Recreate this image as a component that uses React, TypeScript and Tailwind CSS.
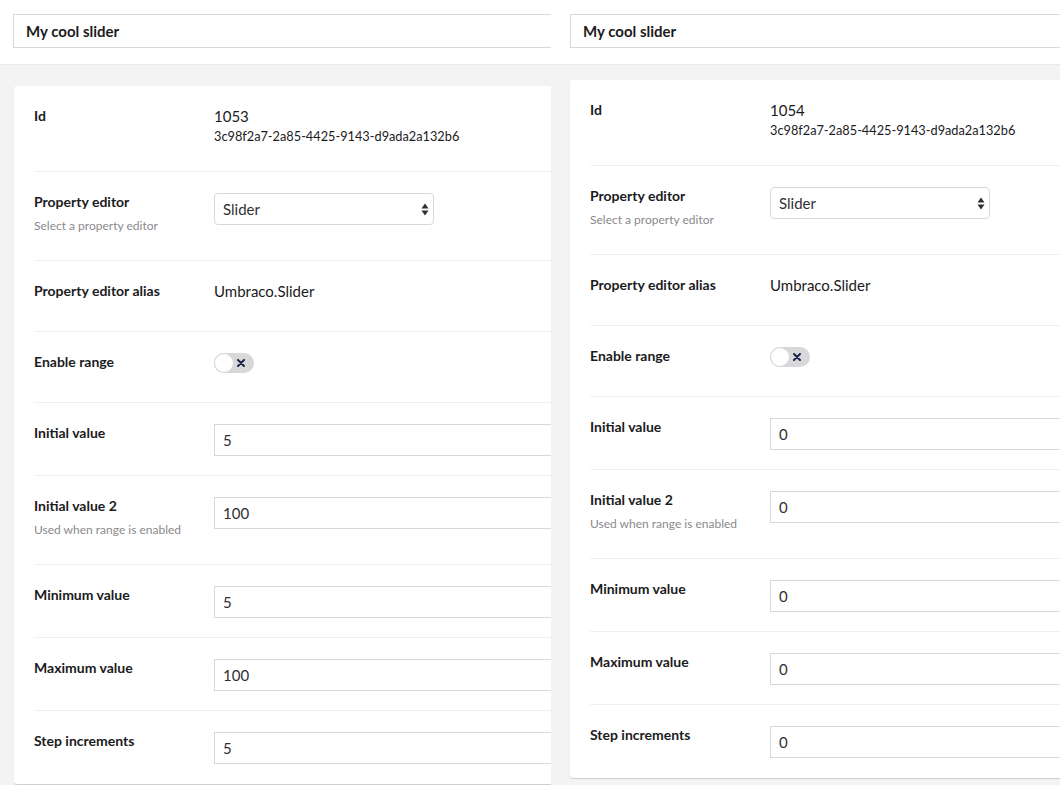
import React from "react";

type Row = {
  label: string;
  desc?: string;
  kind: "id" | "select" | "text" | "toggle" | "input";
  value?: string;
  guid?: string;
};

const makeRows = (id: string, v: string[]): Row[] => [
  { label: "Id", kind: "id", value: id, guid: "3c98f2a7-2a85-4425-9143-d9ada2a132b6" },
  { label: "Property editor", desc: "Select a property editor", kind: "select", value: "Slider" },
  { label: "Property editor alias", kind: "text", value: "Umbraco.Slider" },
  { label: "Enable range", kind: "toggle" },
  { label: "Initial value", kind: "input", value: v[0] },
  { label: "Initial value 2", desc: "Used when range is enabled", kind: "input", value: v[1] },
  { label: "Minimum value", kind: "input", value: v[2] },
  { label: "Maximum value", kind: "input", value: v[3] },
  { label: "Step increments", kind: "input", value: v[4] },
];

function Toggle() {
  return (
    <div className="relative h-5 w-10 rounded-full bg-[#d8d7d9]">
      <div className="absolute left-[1px] top-[1px] h-[18px] w-[18px] rounded-full bg-white shadow-[0_0_0_1px_#d8d7d9]" />
      <svg className="absolute right-[9px] top-[6px]" width="8" height="8" viewBox="0 0 8 8">
        <path d="M1 1L7 7M7 1L1 7" stroke="#1b264f" strokeWidth="2" strokeLinecap="round" />
      </svg>
    </div>
  );
}

function Field({ row }: { row: Row }) {
  const h =
    row.kind === "id" ? "h-[86px]" : row.desc ? "h-[89px]" : row.kind === "input" ? "h-[73px]" : "h-[71px]";
  return (
    <div className={`flex ${h} border-b border-[#f0f0f1] pt-5 last:border-b-0`}>
      <div className="w-[180px] shrink-0">
        <div className="text-[14px] font-bold leading-5 text-[#1b1b1d]">{row.label}</div>
        {row.desc && <div className="mt-1 text-[12px] leading-5 text-[#8a898c]">{row.desc}</div>}
      </div>
      <div className="flex-1">
        {row.kind === "id" && (
          <div>
            <div className="text-[15px] leading-5 text-[#1b1b1d]">{row.value}</div>
            <div className="text-[12.75px] leading-5 text-[#1b1b1d]">{row.guid}</div>
          </div>
        )}
        {row.kind === "select" && (
          <div className="mt-[1px] flex h-8 w-[220px] items-center justify-between rounded-[4px] border border-[#d8d7d9] pl-2 pr-[4px] text-[15px] text-[#303033]">
            <span>{row.value}</span>
            <svg width="8" height="13" viewBox="0 0 8 13">
              <path d="M4 0.5L7.5 5.5H0.5Z M0.5 7.5H7.5L4 12.5Z" fill="#303033" />
            </svg>
          </div>
        )}
        {row.kind === "text" && <div className="text-[15px] leading-5 text-[#1b1b1d]">{row.value}</div>}
        {row.kind === "toggle" && (
          <div className="pt-[1px]">
            <Toggle />
          </div>
        )}
        {row.kind === "input" && (
          <div className="mt-[1px] flex h-8 items-center border border-[#d8d7d9] px-2 text-[15px] text-[#303033]">
            {row.value}
          </div>
        )}
      </div>
    </div>
  );
}

function Header({ pad }: { pad: string }) {
  return (
    <div className={`h-[65px] border-b border-[#e9e9eb] bg-white pt-[14px] ${pad}`}>
      <div className="flex h-[34px] w-[720px] items-center border border-[#d8d7d9] px-3 text-[15px] font-bold text-[#1b1b1d]">
        My cool slider
      </div>
    </div>
  );
}

function Card({ id, values }: { id: string; values: string[] }) {
  return (
    <div className="w-[720px] rounded-[3px] bg-white px-5 shadow-[0_1px_1px_rgba(0,0,0,0.16)]">
      {makeRows(id, values).map((r) => (
        <Field key={r.label} row={r} />
      ))}
    </div>
  );
}

export default function App() {
  return (
    <div className="flex h-[785px] w-[1060px] overflow-hidden bg-[#f4f3f4] font-['Lato','Open_Sans',sans-serif]">
      {/* left editor, cut at its right edge */}
      <div className="w-[551px] shrink-0 overflow-hidden">
        <Header pad="pl-[13px]" />
        <div className="pl-[14px] pt-[21px]">
          <Card id="1053" values={["5", "100", "5", "100", "5"]} />
        </div>
      </div>

      {/* right editor */}
      <div className="flex-1 overflow-hidden">
        <Header pad="pl-[19px]" />
        <div className="pl-[19px] pt-[15px]">
          <Card id="1054" values={["0", "0", "0", "0", "0"]} />
        </div>
      </div>
    </div>
  );
}
